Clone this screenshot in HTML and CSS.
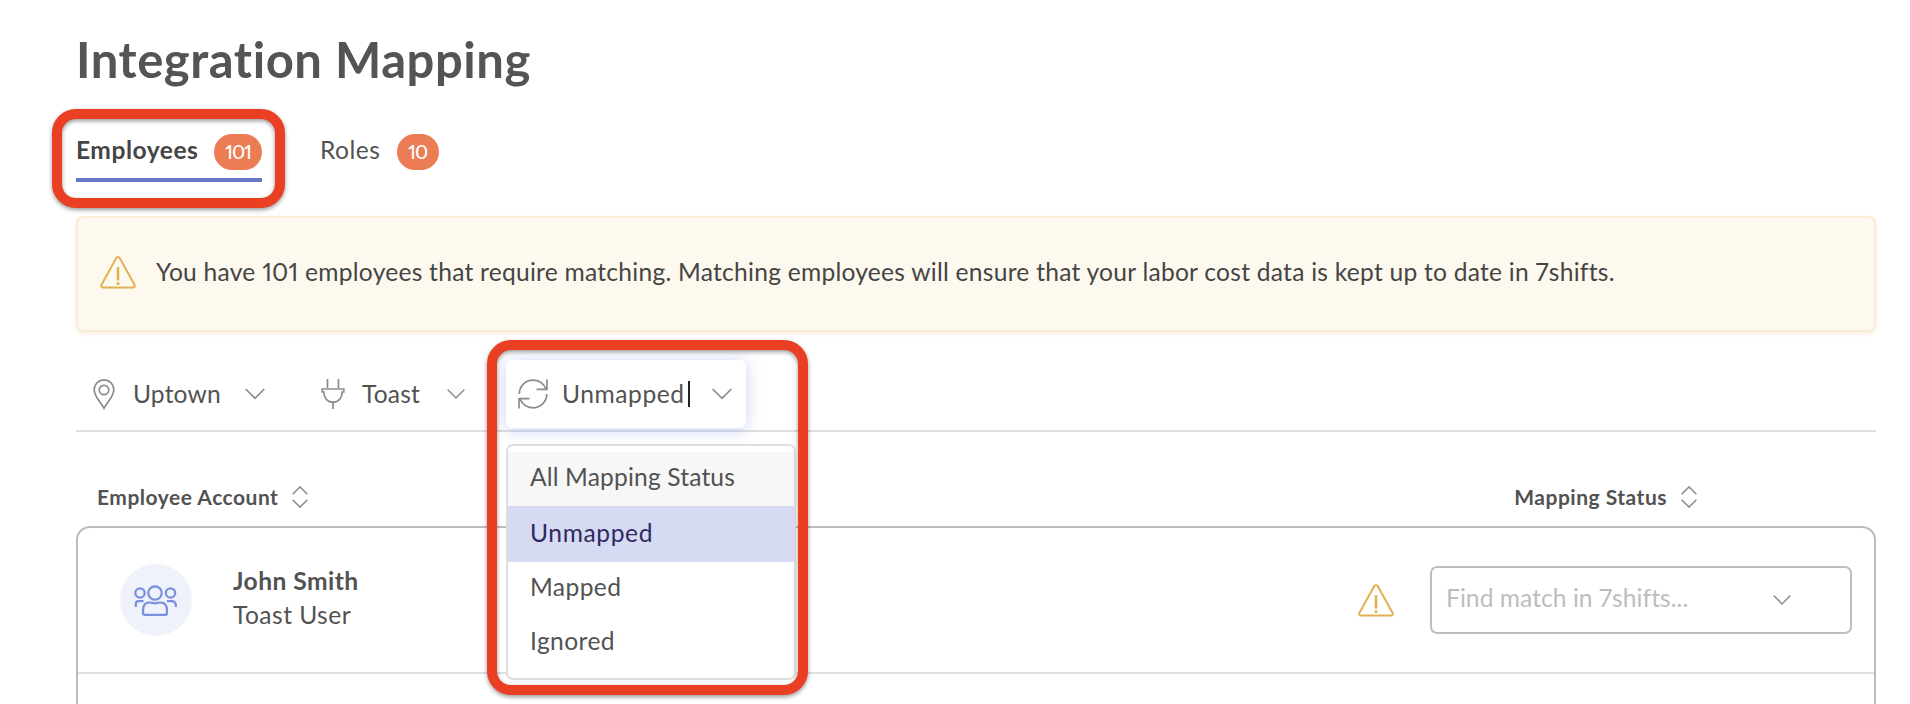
FILE: index.html
```html
<!DOCTYPE html>
<html lang="en">
<head>
<meta charset="utf-8">
<title>Integration Mapping</title>
<link rel="stylesheet" href="styles.css">
</head>
<body>
<svg class="sprite" aria-hidden="true">
  <symbol id="warning" viewBox="0 0 36 33"><path d="M16.3 2.1 1.5 28.7c-.8 1.5 0 2.8 1.6 2.8h29.8c1.6 0 2.4-1.3 1.6-2.8L19.7 2.1c-.8-1.4-2.6-1.4-3.4 0Z"/><path d="M18 11v13.500M18 26.300v2.700" stroke-width="2.6"/></symbol>
  <symbol id="chevron" viewBox="0 0 20 12"><path d="m.7 1 9.3 9.400L19.300 1"/></symbol>
  <symbol id="sort" viewBox="0 0 16 22"><path d="m.6 8.300 7.400-7.400 7.400 7.400M.6 13.700l7.400 7.400 7.400-7.400"/></symbol>
</svg>
<main class="page">
  <h1 class="title">Integration Mapping</h1>
  <nav class="tabs">
    <a class="tab tab-active"><span class="tab-label">Employees</span><span class="badge">101</span></a>
    <a class="tab"><span class="tab-label">Roles</span><span class="badge badge-sm">10</span></a>
  </nav>
  <section class="banner">
    <svg class="warning"><use href="#warning"/></svg>
    <p class="banner-text">You have 101 employees that require matching. Matching employees will ensure that your labor cost data is kept up to date in 7shifts.</p>
  </section>
  <div class="filters">
    <div class="filter filter-location">
      <svg class="icon" viewBox="0 0 30 30"><path d="M15 29.2C12 23.500 5.200 17.500 5.200 10.700a9.800 9.800 0 0 1 19.600 0C24.800 17.500 18 23.500 15 29.200Z"/><circle cx="15" cy="11" r="4.700"/></svg>
      <span class="filter-label">Uptown</span>
      <svg class="chevron"><use href="#chevron"/></svg>
    </div>
    <div class="filter filter-pos">
      <svg class="icon" viewBox="0 0 30 30"><path d="M9.500 0v9M20.500 0v9M4.200 10h21.600v3h-1.600c0 6-3.700 10.200-9.200 10.200S5.800 19 5.800 13H4.200ZM15 23.500V30"/></svg>
      <span class="filter-label">Toast</span>
      <svg class="chevron chevron-sm"><use href="#chevron"/></svg>
    </div>
    <div class="filter filter-open">
      <svg class="icon" viewBox="0 0 30 30"><path d="M1.300 15C1.300 7 7.500 1.200 15 1.200c6 0 10.500 3.300 13 8.600M29 .6v9.800h-10.500M28.700 15c0 8-6.200 13.800-13.700 13.800-6 0-10.500-3.300-13-8.600M1 29.400v-9.800h10.500"/></svg>
      <span class="filter-label unmapped">Unmapped</span><span class="caret"></span>
      <svg class="chevron"><use href="#chevron"/></svg>
      <ul class="menu">
        <li class="option option-hover">All Mapping Status</li>
        <li class="option option-selected unmapped">Unmapped</li>
        <li class="option">Mapped</li>
        <li class="option">Ignored</li>
      </ul>
    </div>
  </div>
  <div class="columns">
    <div class="column"><span>Employee Account</span><svg class="sort"><use href="#sort"/></svg></div>
    <div class="column column-status"><span>Mapping Status</span><svg class="sort"><use href="#sort"/></svg></div>
  </div>
  <section class="list">
    <div class="row">
      <div class="avatar"><svg viewBox="0 0 42 31"><circle cx="20" cy="8" r="6.700"/><circle cx="5" cy="8" r="4.700"/><circle cx="35.500" cy="8" r="4.700"/><path d="M8 28v-2.500c0-5 2.500-8 6.500-8 2.200 0 3.300.8 5.500.8s3.300-.8 5.500-.8c4 0 6.500 3 6.500 8V28c0 1-.8 1.800-1.800 1.800H9.800C8.800 29.800 8 29 8 28ZM.8 22v-2.500c0-2 .8-3.300 2.500-3.300h5.200M32 16.200h5c2.500 0 4 2 4 5.800"/></svg></div>
      <div class="person"><strong>John Smith</strong><p>Toast User</p></div>
      <svg class="warning"><use href="#warning"/></svg>
      <div class="match"><span>Find match in 7shifts...</span><svg class="chevron chevron-sm"><use href="#chevron"/></svg></div>
    </div>
  </section>
  <div class="highlight highlight-tab"></div>
  <div class="highlight highlight-menu"></div>
</main>
</body>
</html>
```
FILE: styles.css
```css
* { box-sizing: border-box; }

body {
  margin: 0;
  background: #fff;
  color: #525252;
  font-family: Lato, "Open Sans", sans-serif;
  font-size: 24.6px;
  line-height: 34px;
  letter-spacing: .15px;
  font-variant-ligatures: none;
  font-variant-numeric: proportional-nums;
}

h1, p, ul { margin: 0; padding: 0; }

.sprite { position: absolute; width: 0; height: 0; }

svg { fill: none; stroke: #8c8c8c; stroke-width: 1.7; flex: none; overflow: visible; }

.page {
  position: relative;
  height: 704px;
  padding: 30px 34px 0 76px;
  overflow: hidden;
  display: flex;
  flex-direction: column;
}

.title { flex: none; font-size: 49px; line-height: 58px; font-weight: 700; letter-spacing: .55px; color: #545454; }

.tabs { display: flex; flex: none; gap: 58px; height: 94px; margin-top: 34px; letter-spacing: .5px; }
.tab { display: flex; align-items: flex-start; gap: 16px; height: 60px; padding-top: 12px; }
.tab-active { width: 186px; justify-content: space-between; gap: 0; color: #454545; font-weight: 700; border-bottom: 4px solid #6478c4; }
.tab-label { line-height: 32px; }
.badge {
  width: 48px;
  height: 36px;
  border-radius: 18px;
  background: #ec7c54;
  color: #fff;
  font-size: 20px;
  line-height: 34px;
  font-weight: 500;
  letter-spacing: -1px;
  text-align: center;
}
.badge-sm { width: 42px; }

.banner {
  display: flex;
  align-items: center;
  height: 116px;
  flex: none;
  padding: 0 0 4px 22px;
  border: 2px solid #f8edd2;
  border-radius: 7px;
  background: #fdf9ee;
  box-shadow: 0 2px 4px rgba(240, 220, 170, .4);
  color: #454545;
}
.banner-text { margin-left: 20px; white-space: nowrap; letter-spacing: .245px; }
.warning { width: 36px; height: 33px; stroke: #e0b252; stroke-width: 2; }

.filters { display: flex; height: 100px; flex: none; padding-top: 28px; border-bottom: 2px solid #dfdfdf; }
.filter { display: flex; align-items: center; height: 68px; position: relative; }
.icon { width: 30px; height: 30px; }
.filter-location { width: 230px; padding-left: 13px; padding-right: 41px; }
.filter-pos { width: 200px; padding-left: 12px; padding-right: 41px; }
.filter-label { margin-left: 14px; padding-bottom: 1px; }
.unmapped { letter-spacing: .55px; }
.chevron { width: 20px; height: 12px; margin-left: auto; }
.chevron-sm { width: 18px; }
.filter-open {
  width: 240px;
  padding-left: 12px;
  padding-right: 14px;
  border-radius: 6px;
  background: #fff;
  box-shadow: 0 2px 16px rgba(100, 120, 220, .35);
  z-index: 2;
}
.caret { width: 2px; height: 26px; background: #222; margin-left: 3px; }

.menu {
  position: absolute;
  top: 84px;
  left: 0;
  width: 290px;
  height: 236px;
  padding-top: 6px;
  border: 2px solid #dedede;
  border-radius: 7px;
  background: #fff;
  list-style: none;
}
.option { height: 54px; padding: 8px 0 0 22px; letter-spacing: .4px; }
.option-hover { background: #f7f7f7; letter-spacing: .15px; }
.option-selected { height: 56px; padding-top: 10px; background: #d6daf2; color: #2f2a60; letter-spacing: .6px; }

.columns { display: flex; height: 94px; flex: none; padding: 48px 0 0 21px; font-size: 21px; font-weight: 700; letter-spacing: .5px; }
.column { display: flex; align-items: center; gap: 14px; height: 34px; }
.column-status { margin-left: auto; margin-right: 179px; }
.sort { width: 16px; height: 22px; stroke-width: 1.5; }

.list { height: 220px; flex: none; border: 2px solid #bdbdbd; border-radius: 14px; }
.row { display: flex; align-items: center; height: 146px; padding: 0 22px 0 42px; border-bottom: 2px solid #dfdfdf; }
.avatar { display: flex; align-items: center; justify-content: center; width: 72px; height: 72px; border-radius: 50%; background: #eff2fa; }
.avatar svg { width: 42px; height: 31px; stroke: #7890de; stroke-width: 2.2; }
.person { margin-left: 41px; padding-bottom: 4px; letter-spacing: .45px; }
.person strong { display: block; }
.row .warning { margin-left: auto; }
.match {
  display: flex;
  align-items: center;
  width: 422px;
  height: 68px;
  margin-left: 36px;
  padding: 0 59px 0 14px;
  border: 2px solid #bdbdbd;
  border-radius: 7px;
  color: #bdbdbd;
  letter-spacing: .05px;
}
.match span { padding-bottom: 4px; }

.highlight { position: absolute; z-index: 3; border: 10px solid #eb3f24; border-radius: 24px; filter: drop-shadow(0 2px 2px rgba(0, 0, 0, .4)); }
.highlight-tab { left: 52px; top: 109px; width: 233px; height: 99px; }
.highlight-menu { left: 487px; top: 340px; width: 321px; height: 355px; }
```
